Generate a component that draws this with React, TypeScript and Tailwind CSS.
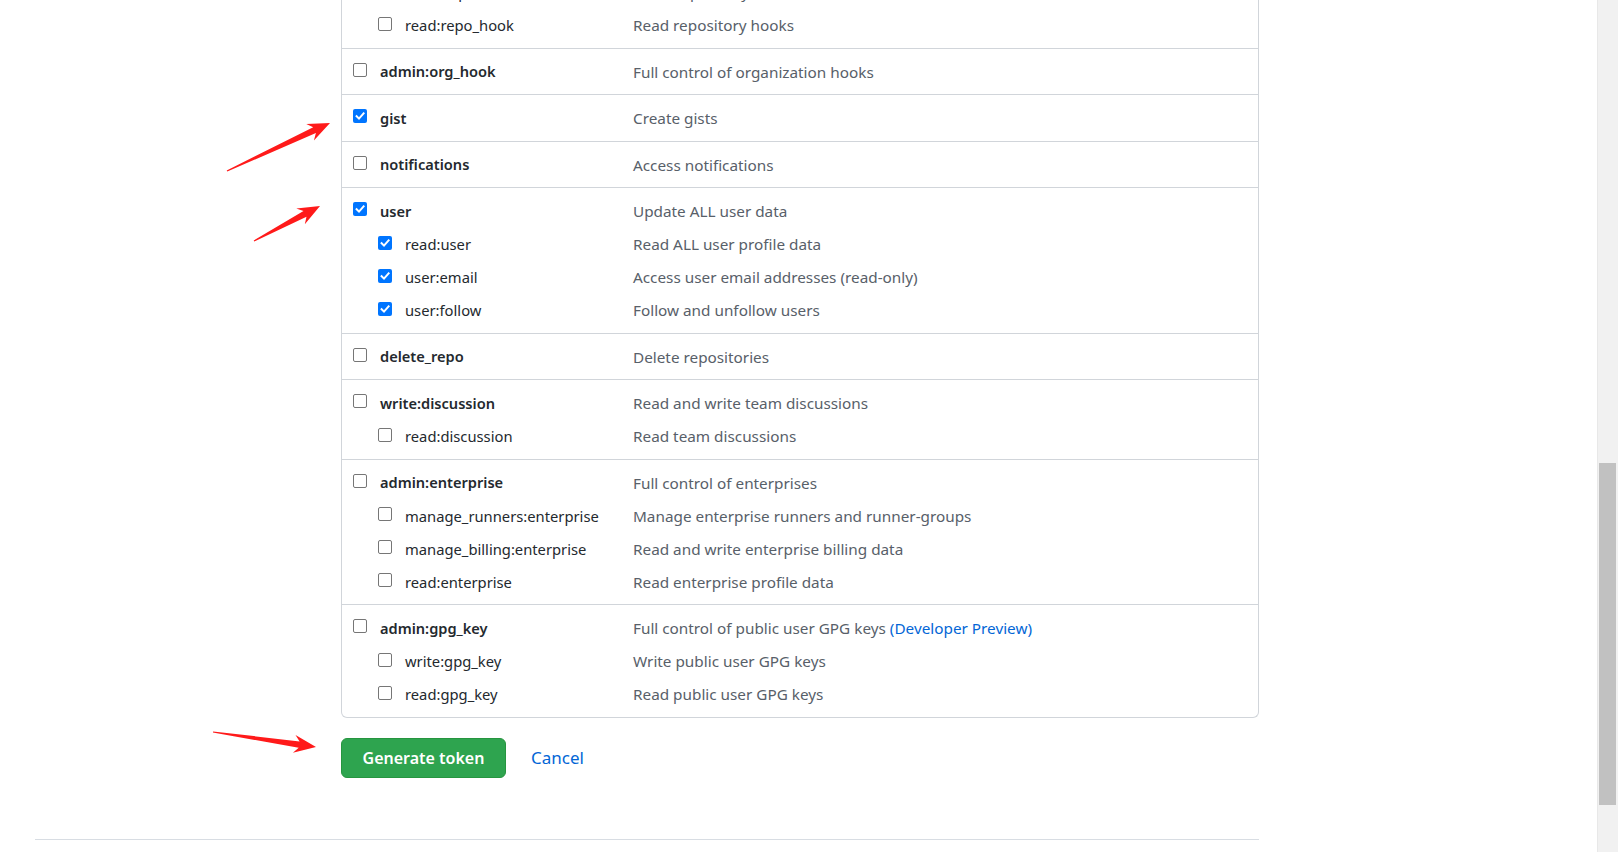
import React from "react";

type Row = { name: string; desc: React.ReactNode; checked?: boolean };
type Group = { main: Row; subs?: Row[] };

const groups: Group[] = [
  {
    main: { name: "admin:repo_hook", desc: "Full control of repository hooks" },
    subs: [
      { name: "write:repo_hook", desc: "Write repository hooks" },
      { name: "read:repo_hook", desc: "Read repository hooks" },
    ],
  },
  { main: { name: "admin:org_hook", desc: "Full control of organization hooks" } },
  { main: { name: "gist", desc: "Create gists", checked: true } },
  { main: { name: "notifications", desc: "Access notifications" } },
  {
    main: { name: "user", desc: "Update ALL user data", checked: true },
    subs: [
      { name: "read:user", desc: "Read ALL user profile data", checked: true },
      { name: "user:email", desc: "Access user email addresses (read-only)", checked: true },
      { name: "user:follow", desc: "Follow and unfollow users", checked: true },
    ],
  },
  { main: { name: "delete_repo", desc: "Delete repositories" } },
  {
    main: { name: "write:discussion", desc: "Read and write team discussions" },
    subs: [{ name: "read:discussion", desc: "Read team discussions" }],
  },
  {
    main: { name: "admin:enterprise", desc: "Full control of enterprises" },
    subs: [
      { name: "manage_runners:enterprise", desc: "Manage enterprise runners and runner-groups" },
      { name: "manage_billing:enterprise", desc: "Read and write enterprise billing data" },
      { name: "read:enterprise", desc: "Read enterprise profile data" },
    ],
  },
  {
    main: {
      name: "admin:gpg_key",
      desc: (
        <>
          Full control of public user GPG keys{" "}
          <span className="text-[#0366d6]">(Developer Preview)</span>
        </>
      ),
    },
    subs: [
      { name: "write:gpg_key", desc: "Write public user GPG keys" },
      { name: "read:gpg_key", desc: "Read public user GPG keys" },
    ],
  },
];

function Box({ checked }: { checked?: boolean }) {
  if (checked) {
    return (
      <span className="mb-[4px] flex h-[14px] w-[14px] shrink-0 items-center justify-center rounded-[2px] bg-[#0075ff]">
        <svg width="12" height="12" viewBox="0 0 12 12" fill="none">
          <path d="M2.6 6.2 L5 8.6 L9.6 3.4" stroke="#ffffff" strokeWidth="2" strokeLinecap="square" strokeLinejoin="miter" />
        </svg>
      </span>
    );
  }
  return (
    <span className="mb-[4px] block h-[14px] w-[14px] shrink-0 rounded-[2px] border border-[#767676] bg-white" />
  );
}

function Line({ row, sub }: { row: Row; sub?: boolean }) {
  return (
    <div className="flex h-[33px] items-center">
      <div className={sub ? "flex w-[255px] shrink-0 items-center gap-[13px]" : "flex w-[280px] shrink-0 items-center gap-[13px]"}>
        <Box checked={row.checked} />
        <span className={sub ? "text-[14.75px] text-[#24292e]" : "text-[14.6px] font-semibold text-[#24292e]"}>{row.name}</span>
      </div>
      <div className="whitespace-nowrap text-[15.3px] text-[#586069]">{row.desc}</div>
    </div>
  );
}

function arrow(tx: number, ty: number, hx: number, hy: number) {
  const dx = hx - tx;
  const dy = hy - ty;
  const len = Math.sqrt(dx * dx + dy * dy);
  const ux = dx / len;
  const uy = dy / len;
  const nx = -uy;
  const ny = ux;
  const headLen = 22;
  const headW = 9;
  const shaftW = 3.2;
  const bx = hx - ux * headLen;
  const by = hy - uy * headLen;
  const ix = hx - ux * (headLen - 5);
  const iy = hy - uy * (headLen - 5);
  const pts = [
    [tx - nx * 0.6, ty - ny * 0.6],
    [tx + nx * 0.6, ty + ny * 0.6],
    [ix + nx * shaftW, iy + ny * shaftW],
    [bx + nx * headW, by + ny * headW],
    [hx, hy],
    [bx - nx * headW, by - ny * headW],
    [ix - nx * shaftW, iy - ny * shaftW],
  ];
  return pts.map((p) => p[0].toFixed(1) + "," + p[1].toFixed(1)).join(" ");
}

export default function App() {
  return (
    <div
      className="flex h-[852px] w-[1618px] overflow-hidden bg-white text-[15px]"
      style={{ fontFamily: '"Noto Sans", "Open Sans", sans-serif' }}
    >
      <div className="relative flex-1">
        <div className="ml-[35px] mt-[-65px] w-[1224px]">
          <div className="ml-[306px] rounded-b-[6px] border-x border-b border-[#d1d5da]">
            {groups.map((g) => (
              <div key={g.main.name} className="border-t border-[#d1d5da] px-[11px] pb-[5.5px] pt-[7px]">
                <Line row={g.main} />
                {g.subs && (
                  <div className="pl-[25px]">
                    {g.subs.map((s) => (
                      <Line key={s.name} row={s} sub />
                    ))}
                  </div>
                )}
              </div>
            ))}
          </div>
          <div className="ml-[306px] mt-[20px] flex items-center">
            <button className="flex h-[40px] w-[165px] items-center justify-center rounded-[6px] border border-[#26953f] bg-[#2ea44f] text-[16px] font-semibold text-white">
              Generate token
            </button>
            <a className="ml-[25px] text-[17px] text-[#0366d6]">Cancel</a>
          </div>
          <div className="mt-[61px] border-t border-[#d8dde3]" />
        </div>
        <svg className="pointer-events-none absolute left-0 top-0" width="1597" height="852">
          <polygon points={arrow(227, 171, 330, 123)} fill="#ff1a1a" />
          <polygon points={arrow(254, 241, 320, 206)} fill="#ff1a1a" />
          <polygon points={arrow(213, 732, 316, 747)} fill="#ff1a1a" />
        </svg>
      </div>
      <div className="flex h-full w-[21px] shrink-0 flex-col border-l border-[#e8e8e8] bg-[#f1f1f1] pl-[1px] pr-[2px]">
        <div className="mt-[463px] h-[342px] bg-[#c1c1c1]" />
      </div>
    </div>
  );
}
